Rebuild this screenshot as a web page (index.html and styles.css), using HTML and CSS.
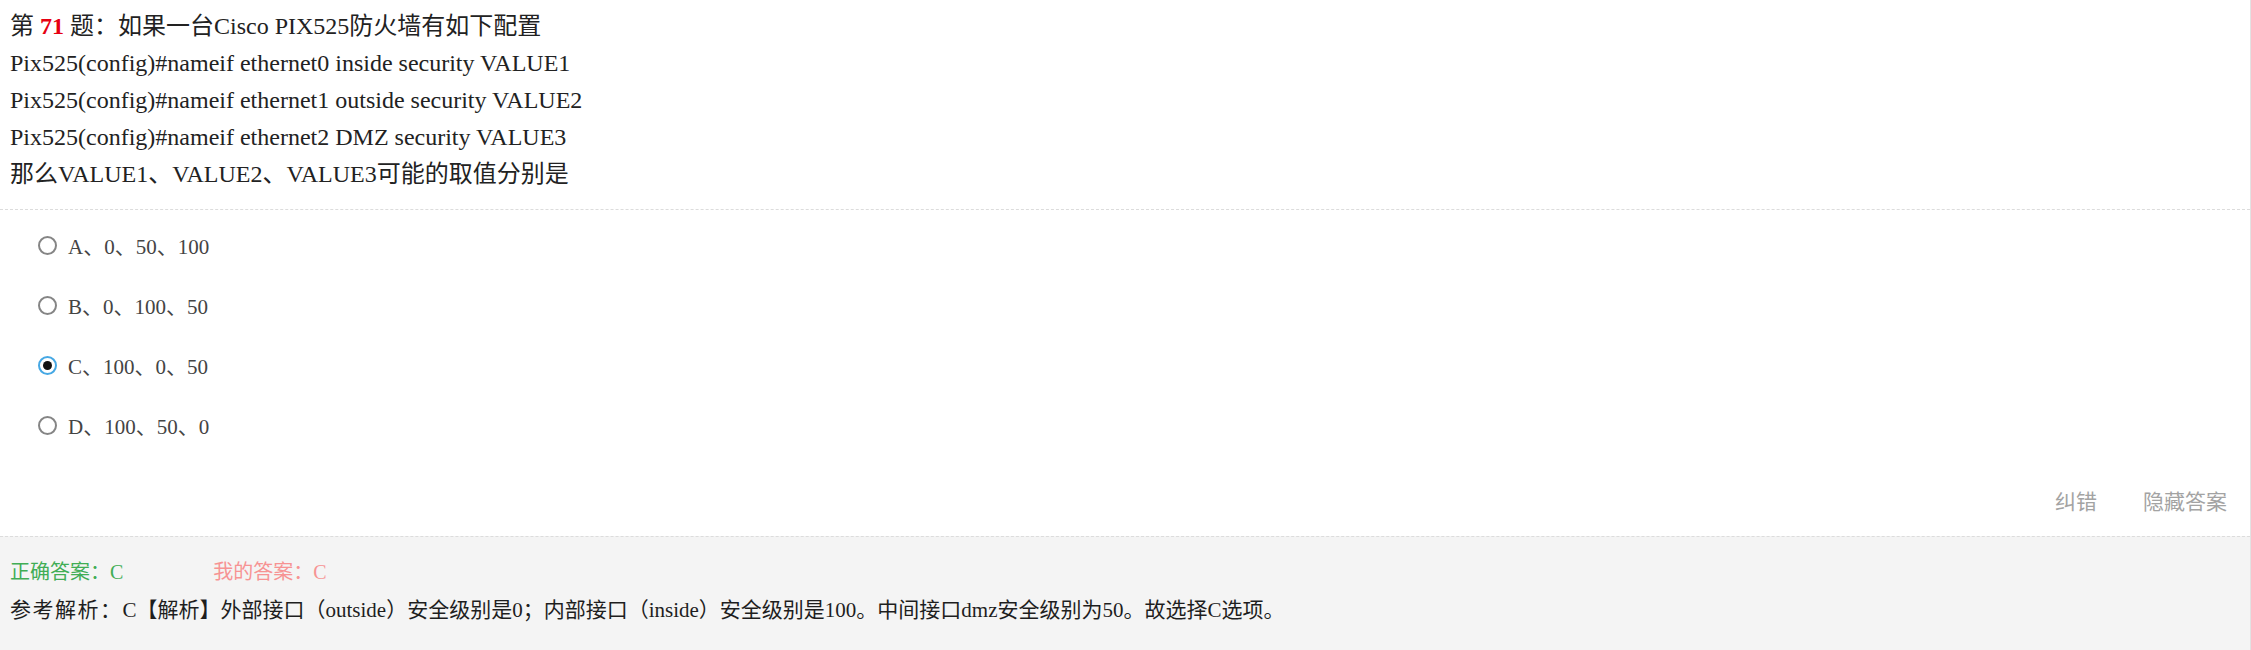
FILE: index.html
```html
<!DOCTYPE html>
<html lang="zh-CN">
<head>
<meta charset="utf-8">
<title>第71题</title>
<link rel="stylesheet" href="styles.css">
</head>
<body>
<div class="page">
  <div class="question">
    <div class="q-line">第 <b class="num">71</b> 题：如果一台Cisco PIX525防火墙有如下配置</div>
    <div class="q-line">Pix525(config)#nameif ethernet0 inside security VALUE1</div>
    <div class="q-line">Pix525(config)#nameif ethernet1 outside security VALUE2</div>
    <div class="q-line">Pix525(config)#nameif ethernet2 DMZ security VALUE3</div>
    <div class="q-line">那么VALUE1、VALUE2、VALUE3可能的取值分别是</div>
  </div>
  <ul class="options">
    <li class="option"><span class="radio"></span><span class="opt-text">A、0、50、100</span></li>
    <li class="option"><span class="radio"></span><span class="opt-text">B、0、100、50</span></li>
    <li class="option"><span class="radio checked"></span><span class="opt-text">C、100、0、50</span></li>
    <li class="option"><span class="radio"></span><span class="opt-text">D、100、50、0</span></li>
  </ul>
  <div class="actions">
    <span class="action">纠错</span>
    <span class="action">隐藏答案</span>
  </div>
  <div class="answer">
    <div class="answer-row">
      <span class="correct">正确答案：C</span>
      <span class="mine">我的答案：C</span>
    </div>
    <div class="analysis"><span class="label">参考解析：</span>C【解析】外部接口（outside）安全级别是0；内部接口（inside）安全级别是100。中间接口dmz安全级别为50。故选择C选项。</div>
  </div>
</div>
</body>
</html>
```

FILE: styles.css
```css
html, body {
  margin: 0;
  padding: 0;
  background: #ffffff;
}

body {
  font-family: "Liberation Serif", "Noto Sans CJK SC", serif;
  color: #222;
}

.page {
  width: 2250px;
  min-height: 650px;
  border-right: 1px solid #e2e2e2;
  display: flex;
  flex-direction: column;
}

.question {
  padding: 8px 10px 16px 10px;
  border-bottom: 1px dashed #dcdcdc;
}

.q-line {
  font-size: 24px;
  line-height: 37px;
  color: #222;
  white-space: nowrap;
}

.num {
  color: #e60012;
  font-weight: bold;
}

.options {
  list-style: none;
  margin: 0;
  padding: 5px 0 0 0;
}

.option {
  height: 60px;
  display: flex;
  align-items: center;
  padding-left: 38px;
}

.radio {
  width: 19px;
  height: 19px;
  box-sizing: border-box;
  border: 2px solid #858585;
  border-radius: 50%;
  background: #fff;
  display: flex;
  align-items: center;
  justify-content: center;
  flex: none;
}

.radio.checked {
  border: 2px solid #46a8e4;
}

.radio.checked::after {
  content: "";
  width: 9px;
  height: 9px;
  border-radius: 50%;
  background: #111;
}

.opt-text {
  margin-left: 11px;
  font-size: 21px;
  color: #444;
}

.actions {
  display: flex;
  justify-content: flex-end;
  gap: 46px;
  margin-top: 25px;
  padding: 0 23px 16px 0;
  line-height: 40px;
  font-family: "Noto Sans CJK SC", sans-serif;
  font-size: 21px;
  color: #a3a3a3;
}

.answer {
  flex: 1;
  background: #f4f4f4;
  border-top: 1px dashed #dcdcdc;
  padding: 20px 10px 20px 10px;
}

.answer-row {
  font-size: 20px;
  line-height: 30px;
  display: flex;
}

.correct {
  color: #41ad55;
  margin-right: 90px;
}

.mine {
  color: #f79393;
}

.analysis {
  margin-top: 8px;
  font-size: 21px;
  line-height: 30px;
  color: #1e1e1e;
  white-space: nowrap;
}

.label {
  letter-spacing: 1.5px;
}
```
